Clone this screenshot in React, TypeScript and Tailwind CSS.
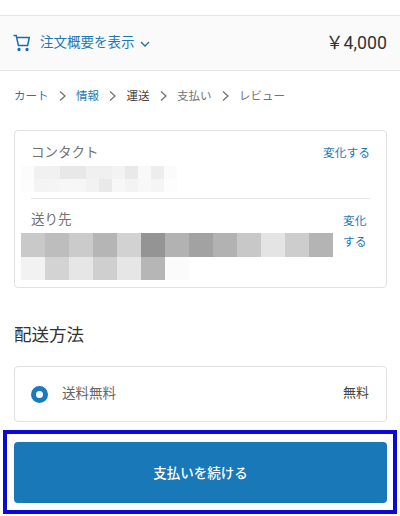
import React from "react";

const big1 = ["#c9c9c9","#bdbdbd","#cbcbcb","#b5b5b5","#d2d2d2","#949494","#b2b2b2","#a2a2a2","#b2b2b2","#c8c8c8","#e4e4e4","#cdcdcd","#b4b4b4"];
const big2 = ["#f2f2f2","#d3d3d3","#e6e6e6","#cfcfcf","#e6e6e6","#b6b6b6","#fbfbfb"];
const c1 = ["#fcfcfc","#f1f1f1","#f1f1f1","#e8e8e8","#e8e8e8","#f0f0f0","#f0f0f0","#f3f3f3","#e9e9e9","#f9f9f9","#ededed","#fbfbfb"];
const c2 = ["#fdfdfd","#f4f4f4","#f5f5f5","#f7f7f7","#f6f6f6","#f2f2f2","#e9e9e9","#f7f7f7","#f3f3f3","#f8f8f8","#f5f5f5","#fdfdfd"];

function Chevron() {
  return (
    <svg width="7" height="12" viewBox="0 0 7 12" fill="none" stroke="#737373" strokeWidth="1.3">
      <path d="M1 1.5 L6 6 L1 10.5" />
    </svg>
  );
}

export default function App() {
  return (
    <div className="w-[400px] h-[516px] bg-white overflow-hidden font-['Roboto','Noto_Sans_CJK_JP',sans-serif]">
      <div className="mt-[15px] h-[56px] bg-[#fafafa] border-y border-[#e6e6e6] flex items-center justify-between pl-[14px] pr-[13px]">
        <div className="flex items-center text-[#1f77b4]">
          <svg className="-ml-[1px]" width="18" height="18" viewBox="0 0 18 18" fill="none" stroke="#1a6fa8" strokeWidth="1.5">
            <path d="M0.5 1.5 H3.2 L5.4 11.5 H14.6 L16.3 3.5 H3.8" />
            <circle cx="6" cy="15.5" r="0.9" fill="#1a6fa8" />
            <circle cx="14" cy="15.5" r="0.9" fill="#1a6fa8" />
          </svg>
          <span className="ml-[9px] text-[13.5px] leading-none">注文概要を表示</span>
          <svg className="ml-[5px] mt-[2px]" width="10" height="7" viewBox="0 0 10 7" fill="none" stroke="#1a6fa8" strokeWidth="1.3">
            <path d="M1 1 L5 5 L9 1" />
          </svg>
        </div>
        <span className="text-[17.75px] font-normal text-[#333333]">{"\uFFE5"}4,000</span>
      </div>

      <nav className="mt-[16px] pl-[14px] flex items-center text-[11.5px] leading-[18px]">
        <span className="text-[#1f77b4]">カート</span>
        <span className="mx-[10.25px]"><Chevron /></span>
        <span className="text-[#1f77b4]">情報</span>
        <span className="mx-[10.25px]"><Chevron /></span>
        <span className="text-[#444444]">運送</span>
        <span className="mx-[10.25px]"><Chevron /></span>
        <span className="text-[#737373]">支払い</span>
        <span className="mx-[10.25px]"><Chevron /></span>
        <span className="text-[#737373]">レビュー</span>
      </nav>

      <section className="mt-[25px] mx-[14px] w-[373px] h-[158px] border border-[#e1e1e1] rounded-[4px] px-[16px] pt-[11px]">
        <div className="flex justify-between items-start">
          <span className="text-[13.5px] leading-[20px] text-[#737373]">コンタクト</span>
          <span className="text-[11.75px] leading-[20px] text-[#1f77b4] mt-[1px]">変化する</span>
        </div>
        <div className="ml-[-10px] mt-[3px]">
          <div className="flex">{c1.map((c, i) => <div key={i} className="w-[13px] h-[13px]" style={{ background: c }} />)}</div>
          <div className="flex">{c2.map((c, i) => <div key={i} className="w-[13px] h-[13px]" style={{ background: c }} />)}</div>
        </div>
        <div className="mt-[6px] border-t border-[#e6e6e6]" />
        <div className="mt-[10px] flex justify-between">
          <div>
            <div className="text-[13.5px] leading-[20px] text-[#737373]">送り先</div>
            <div className="ml-[-10px] mt-[4px]">
              <div className="flex">{big1.map((c, i) => <div key={i} className="w-[24px] h-[24px]" style={{ background: c }} />)}</div>
              <div className="flex">{big2.map((c, i) => <div key={i} className="w-[24px] h-[23px]" style={{ background: c }} />)}</div>
            </div>
          </div>
          <span className="w-[24px] mr-[3px] mt-[2px] text-[11.75px] leading-[21px] text-[#1f77b4]">変化する</span>
        </div>
      </section>

      <h2 className="mt-[36px] ml-[14px] text-[17.5px] leading-[22px] font-normal text-[#333333]">配送方法</h2>

      <section className="mt-[20px] mx-[14px] w-[373px] h-[56px] border border-[#e1e1e1] rounded-[4px] flex items-center pl-[16px] pr-[17px]">
        <span className="w-[17px] h-[17px] rounded-full border-[5px] border-[#197bbd] bg-white" />
        <span className="ml-[14px] text-[13.5px] text-[#666666] -mt-[2px]">送料無料</span>
        <span className="ml-auto text-[13px] text-[#444444] -mt-[2px]">無料</span>
      </section>

      <div className="mt-[8px] mx-[3px] w-[394px] h-[84px] border-[4px] border-[#0a0ad8] pt-[8px] px-[7px]">
        <button className="w-[373px] h-[61px] pt-[1px] bg-[#1878b8] rounded-[4px] text-white text-[13.5px] font-medium">
          支払いを続ける
        </button>
      </div>
    </div>
  );
}
